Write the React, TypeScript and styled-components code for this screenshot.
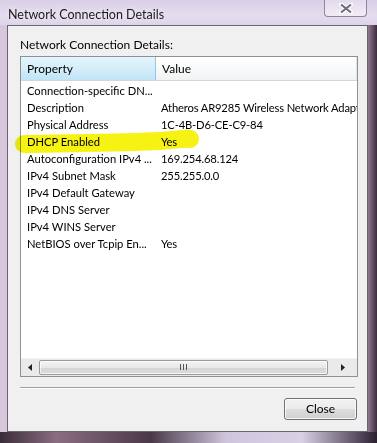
import styled, { createGlobalStyle } from "styled-components";

const GlobalStyle = createGlobalStyle`
    html, body {
        margin: 0;
        padding: 0;
        background: #1e1820;
    }
    body {
        font-family: Lato, "Liberation Sans", Arial, sans-serif;
    }
`;

const rows: [string, string][] = [
    ["Connection-specific DN...", ""],
    ["Description", "Atheros AR9285 Wireless Network Adapt"],
    ["Physical Address", "1C-4B-D6-CE-C9-84"],
    ["DHCP Enabled", "Yes"],
    ["Autoconfiguration IPv4 ...", "169.254.68.124"],
    ["IPv4 Subnet Mask", "255.255.0.0"],
    ["IPv4 Default Gateway", ""],
    ["IPv4 DNS Server", ""],
    ["IPv4 WINS Server", ""],
    ["NetBIOS over Tcpip En...", "Yes"],
];

const Window = styled.div`
    position: relative;
    width: 377px;
    height: 443px;
    display: flex;
    flex-direction: column;
    overflow: hidden;
    background: linear-gradient(90deg, #d8c6da 0%, #dccfe6 30%, #d6cce6 70%, #a98aa6 97%, #3b2c3c 100%);
`;

const TitleBar = styled.div`
    height: 27px;
    display: flex;
    justify-content: space-between;
    align-items: flex-start;
    padding-left: 8px;
    padding-right: 10px;
    background: linear-gradient(180deg, #d9cfe7 0%, #e4dcee 60%, #ddd4e9 100%);
`;

const Title = styled.span`
    margin-top: 7px;
    font-size: 12.5px;
    color: #1a1a1a;
    text-shadow: 0 0 6px rgba(255, 255, 255, 0.9);
`;

const CloseBox = styled.div`
    width: 43px;
    height: 17px;
    box-sizing: border-box;
    border: 1px solid #8f869c;
    border-top: none;
    border-radius: 0 0 4px 4px;
    background: linear-gradient(180deg, rgba(255, 255, 255, 0.25), rgba(255, 255, 255, 0.45));
    display: flex;
    align-items: center;
    justify-content: center;
`;

const Client = styled.div`
    flex: 1;
    margin: 0 9px 0 7px;
    border: 1px solid #6a6472;
    background: #f0f0f0;
    display: flex;
    flex-direction: column;
    padding: 11px 9px 11px 12px;
    font-size: 12px;
    color: #000;
`;

const Label = styled.div`
    height: 19px;
    line-height: 16px;
`;

const ListBox = styled.div`
    height: 321px;
    box-sizing: border-box;
    border: 1px solid #8d9296;
    background: #fff;
    display: flex;
    flex-direction: column;
    font-size: 11.2px;
`;

const Header = styled.div`
    height: 23px;
    display: flex;
    border-bottom: 1px solid #d5d5d5;
    background: linear-gradient(180deg, #ffffff 0%, #f7f8f9 60%, #f1f2f4 100%);
    font-size: 12px;
`;

const HeadCell = styled.div<{ $w?: number; $hot?: boolean }>`
    width: ${(p) => (p.$w ? `${p.$w}px` : "auto")};
    flex: ${(p) => (p.$w ? "none" : "1")};
    box-sizing: border-box;
    padding-left: 6px;
    display: flex;
    align-items: center;
    border-right: 1px solid ${(p) => (p.$hot ? "#93c9e3" : "#e3e3e3")};
    background: ${(p) =>
        p.$hot ? "linear-gradient(180deg, #e3f4fc 0%, #d5eef9 50%, #bfe4f6 100%)" : "transparent"};
`;

const Body = styled.div`
    flex: 1;
    padding-top: 1px;
    overflow: hidden;
`;

const Row = styled.div`
    height: 17px;
    display: flex;
    align-items: center;
    white-space: nowrap;
`;

const Cell = styled.div<{ $w?: number }>`
    width: ${(p) => (p.$w ? `${p.$w}px` : "auto")};
    flex: none;
    padding-left: 6px;
    box-sizing: border-box;
    letter-spacing: ${(p) => (p.$w ? "0" : "-0.15px")};
`;

const ScrollBar = styled.div`
    height: 17px;
    display: flex;
    align-items: stretch;
    background: #eaeaea;
    border-top: 1px solid #f4f4f4;
`;

const Arrow = styled.div<{ $w?: number }>`
    width: ${(p) => p.$w ?? 17}px;
    display: flex;
    align-items: center;
    justify-content: center;
`;

const Thumb = styled.div`
    flex: 1;
    margin: 1px 1px;
    border: 1px solid #9a9a9a;
    border-radius: 2px;
    background: linear-gradient(180deg, #f4f4f4 0%, #e8e8e8 50%, #d6d6d6 52%, #dcdcdc 100%);
    display: flex;
    align-items: center;
    justify-content: center;
    box-shadow: inset 0 0 0 1px rgba(255, 255, 255, 0.7);
`;

const Grip = styled.div`
    display: flex;
    gap: 2px;
`;

const GripLine = styled.span`
    width: 1px;
    height: 6px;
    background: #555;
`;

const Separator = styled.div`
    margin: 10px 3px 0 0;
    height: 1px;
    background: #a0a0a0;
    border-bottom: 1px solid #fff;
`;

const ButtonRow = styled.div`
    display: flex;
    justify-content: flex-end;
    margin-top: 9px;
    padding-right: 1px;
`;

const Button = styled.button`
    width: 73px;
    height: 22px;
    border: 1px solid #707070;
    border-radius: 3px;
    background: linear-gradient(180deg, #f2f2f2 0%, #ebebeb 50%, #dddddd 51%, #cfcfcf 100%);
    box-shadow: inset 0 0 0 1px rgba(255, 255, 255, 0.8);
    font: inherit;
    font-size: 12px;
    color: #000;
    padding: 0;
`;

const BottomFrame = styled.div`
    height: 12px;
    background: linear-gradient(90deg, #3a2c38 0%, #8b6d82 15%, #4a3848 40%, #cfc6dd 60%, #d9d0e6 80%, #2a2030 100%);
`;

const Highlight = styled.svg`
    position: absolute;
    left: 0;
    top: 0;
    pointer-events: none;
    mix-blend-mode: multiply;
`;

export default function App() {
    return (
        <Window>
            <GlobalStyle />
            <TitleBar>
                <Title>Network Connection Details</Title>
                <CloseBox>
                    <svg width="14" height="11" viewBox="0 0 14 11">
                        <path d="M2 1.5 L12 9.5 M12 1.5 L2 9.5" stroke="#fff" strokeWidth="4" strokeLinecap="round" />
                        <path d="M2 1.5 L12 9.5 M12 1.5 L2 9.5" stroke="#6d6877" strokeWidth="2" />
                    </svg>
                </CloseBox>
            </TitleBar>
            <Client>
                <Label>Network Connection Details:</Label>
                <ListBox>
                    <Header>
                        <HeadCell $w={135} $hot>Property</HeadCell>
                        <HeadCell>Value</HeadCell>
                    </Header>
                    <Body>
                        {rows.map(([k, v]) => (
                            <Row key={k}>
                                <Cell $w={134}>{k}</Cell>
                                <Cell>{v}</Cell>
                            </Row>
                        ))}
                    </Body>
                    <ScrollBar>
                        <Arrow>
                            <svg width="4" height="7" viewBox="0 0 4 7">
                                <path d="M4 0 L0 3.5 L4 7 Z" fill="#222" />
                            </svg>
                        </Arrow>
                        <Thumb>
                            <Grip>
                                <GripLine />
                                <GripLine />
                                <GripLine />
                            </Grip>
                        </Thumb>
                        <Arrow $w={28}>
                            <svg width="4" height="7" viewBox="0 0 4 7">
                                <path d="M0 0 L4 3.5 L0 7 Z" fill="#222" />
                            </svg>
                        </Arrow>
                    </ScrollBar>
                </ListBox>
                <Separator />
                <ButtonRow>
                    <Button>Close</Button>
                </ButtonRow>
            </Client>
            <BottomFrame />

            {/* yellow highlighter stroke drawn over the DHCP row */}
            <Highlight width="377" height="443" viewBox="0 0 377 443">
                <path
                    d="M24 144 C 60 143, 120 143, 160 141 C 175 140, 184 138, 190 139"
                    stroke="#f6f214"
                    strokeWidth="18"
                    strokeLinecap="round"
                    fill="none"
                />
            </Highlight>
        </Window>
    );
}
